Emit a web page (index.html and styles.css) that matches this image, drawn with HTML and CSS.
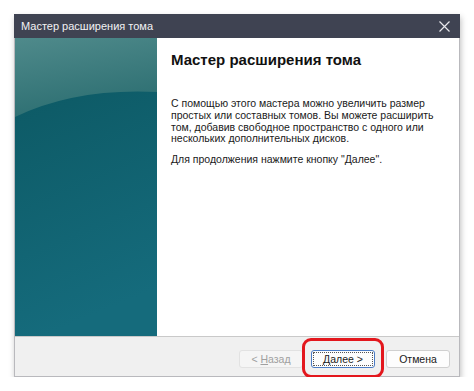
FILE: index.html
```html
<!DOCTYPE html>
<html lang="ru">
<head>
    <meta charset="UTF-8">
    <title>Мастер расширения тома</title>
    <link rel="stylesheet" href="styles.css">
</head>
<body>
    <div class="wizard">
        <div class="titlebar">
            <span class="title">Мастер расширения тома</span>
            <span class="close">
                <svg width="11" height="11" viewBox="0 0 11 11"><path d="M0.5 0.5L10.5 10.5M10.5 0.5L0.5 10.5" stroke="#e8e8ec" stroke-width="1.2"/></svg>
            </span>
        </div>
        <div class="main">
            <div class="side">
                <svg width="142" height="298" viewBox="0 0 142 298" preserveAspectRatio="none">
                    <defs>
                        <linearGradient id="top" x1="0" y1="0" x2="0.3" y2="1">
                            <stop offset="0" stop-color="#4f8a8b"/>
                            <stop offset="1" stop-color="#2d6f72"/>
                        </linearGradient>
                        <linearGradient id="bottom" x1="0" y1="0" x2="0.2" y2="1">
                            <stop offset="0" stop-color="#0b5660"/>
                            <stop offset="1" stop-color="#156b7c"/>
                        </linearGradient>
                    </defs>
                    <rect width="142" height="298" fill="url(#bottom)"/>
                    <path d="M0 0H142V54Q60 50 0 79Z" fill="url(#top)"/>
                </svg>
            </div>
            <div class="content">
                <h1>Мастер расширения тома</h1>
                <p>С помощью этого мастера можно увеличить размер<br>
                простых или составных томов. Вы можете расширить<br>
                том, добавив свободное пространство с одного или<br>
                нескольких дополнительных дисков.</p>
                <p>Для продолжения нажмите кнопку "Далее".</p>
            </div>
        </div>
        <div class="footer">
            <button class="btn" disabled>&lt; <u>Н</u>азад</button>
            <button class="btn btn-next"><u>Д</u>алее &gt;</button>
            <button class="btn btn-cancel">Отмена</button>
        </div>
    </div>
</body>
</html>
```

FILE: styles.css
```css
body {
    margin: 0;
    background: #ffffff;
    font-family: 'Liberation Sans', Arial, sans-serif;
}
.wizard {
    margin: 14px 0 0 14px;
    width: 446px;
    height: 363px;
    box-sizing: border-box;
    border: 1px solid #b9b9bd;
    display: flex;
    flex-direction: column;
    background: #ffffff;
    box-shadow: 1px 3px 6px rgba(0, 0, 0, 0.25);
}
.titlebar {
    height: 24px;
    background: #3f4352;
    color: #f2f2f4;
    display: flex;
    align-items: center;
    justify-content: space-between;
    padding: 0 6px 0 7px;
    margin: -1px -1px 0 -1px;
}
.title {
    font-size: 11px;
}
.close {
    display: flex;
    padding: 0 4px;
}
.main {
    flex: 1;
    display: flex;
}
.side {
    width: 142px;
    display: flex;
}
.content {
    flex: 1;
    padding: 13px 12px 0 14px;
    color: #1a1a1a;
}
h1 {
    margin: 0 0 30px 0;
    font-size: 15px;
    font-weight: 700;
    color: #111;
}
p {
    margin: 0 0 9px 0;
    font-size: 10.5px;
    line-height: 11.8px;
}
.footer {
    height: 40px;
    box-sizing: border-box;
    border-top: 1px solid #c9c9c9;
    background: #f0f0f0;
    display: flex;
    align-items: center;
    justify-content: flex-end;
    padding: 4px 9px 0 0;
    gap: 8px;
}
.btn {
    width: 64px;
    height: 18px;
    box-sizing: border-box;
    border: 1px solid #d0d0d0;
    border-radius: 3px;
    background: #fdfdfd;
    font-family: 'Liberation Sans', Arial, sans-serif;
    font-size: 10.5px;
    color: #1a1a1a;
    padding: 0;
    position: relative;
}
.btn:disabled {
    color: #a0a0a0;
    background: #f5f5f5;
    border-color: #e2e2e2;
}
.btn-next {
    border: 1px solid #4a7bc4;
    outline: 1px dotted #555;
    outline-offset: -3px;
}
.btn-next::after {
    content: '';
    position: absolute;
    left: -10px;
    right: -10px;
    top: -13px;
    bottom: -11px;
    border: 3px solid #e3171d;
    border-radius: 9px;
}
.btn-cancel {
    margin-left: 3px;
}
```
